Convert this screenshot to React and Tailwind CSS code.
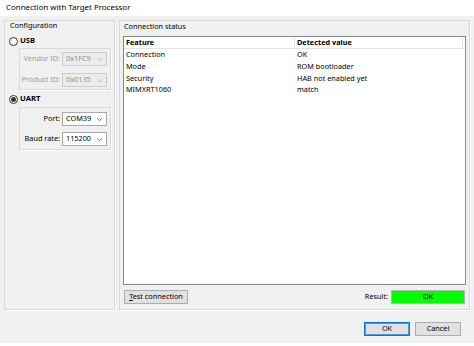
import React from "react";

function Chevron({ color = "#555" }) {
  return (
    <svg width="7" height="5" viewBox="0 0 7 5">
      <path d="M1 1.2 L3.5 3.6 L6 1.2" fill="none" stroke={color} strokeWidth="0.8" />
    </svg>
  );
}

function Combo({ value, disabled }) {
  return (
    <div
      className={
        "w-[45px] h-[14px] flex items-center justify-between pl-[3px] pr-[3px] border " +
        (disabled
          ? "border-[#cccccc] bg-[#ececec] text-[#8d8d8d]"
          : "border-[#a9a9a9] bg-white text-black")
      }
    >
      <span>{value}</span>
      <Chevron color={disabled ? "#b0b0b0" : "#555"} />
    </div>
  );
}

function Radio({ checked }) {
  return (
    <div className="w-[9px] h-[9px] rounded-full border border-[#333333] bg-white flex items-center justify-center shrink-0">
      {checked && <div className="w-[5px] h-[5px] rounded-full bg-[#333333]" />}
    </div>
  );
}

const rows = [
  ["Connection", "OK"],
  ["Mode", "ROM bootloader"],
  ["Security", "HAB not enabled yet"],
  ["MIMXRT1060", "match"],
];

export default function App() {
  return (
    <div className="relative w-[474px] h-[346px] bg-[#f0f0f0] flex flex-col text-[7.3px] leading-none text-black font-['Noto_Sans',sans-serif] overflow-hidden whitespace-nowrap">
      <div className="h-[16px] bg-white flex items-center pl-[6px] shrink-0 text-[7.9px]">
        Connection with Target Processor
      </div>
      <div className="flex gap-[4px] pl-[4px] pr-[4px] pt-[4px] shrink-0">
        <div className="w-[111px] h-[290px] border border-[#d9d9d9] shadow-[1px_1px_0_#ffffff] flex flex-col">
          <div className="h-[10px] flex items-center pl-[5px]">Configuration</div>
          <div className="h-[10px] mt-[5px] flex items-center gap-[2px] pl-[4px] font-bold text-[7.6px]">
            <Radio />
            <span>USB</span>
          </div>
          <div className="ml-[14px] w-[92px] mt-[2px] border border-[#d9d9d9] shadow-[1px_1px_0_#ffffff] pt-[3px] pb-[2px] pr-[3px] flex flex-col gap-[7px] text-[#9a9a9a]">
            <div className="flex items-center justify-end gap-[2px]">
              <span>Vendor ID:</span>
              <Combo value="0x1FC9" disabled />
            </div>
            <div className="flex items-center justify-end gap-[2px]">
              <span>Product ID:</span>
              <Combo value="0x0135" disabled />
            </div>
          </div>
          <div className="h-[10px] mt-[4px] flex items-center gap-[2px] pl-[4px] font-bold text-[7.6px]">
            <Radio checked />
            <span>UART</span>
          </div>
          <div className="ml-[14px] w-[92px] mt-[3px] border border-[#d9d9d9] shadow-[1px_1px_0_#ffffff] pt-[4px] pb-[3px] pr-[3px] flex flex-col gap-[6px]">
            <div className="flex items-center justify-end gap-[2px]">
              <span>Port:</span>
              <Combo value="COM39" />
            </div>
            <div className="flex items-center justify-end gap-[2px]">
              <span>Baud rate:</span>
              <Combo value="115200" />
            </div>
          </div>
        </div>
        <div className="w-[351px] h-[290px] border border-[#d9d9d9] shadow-[1px_1px_0_#ffffff] flex flex-col pb-[5px]">
          <div className="h-[10px] mt-[1px] flex items-center pl-[4px]">Connection status</div>
          <div className="flex-1 bg-white border border-[#828790] mt-[4px] ml-[3px] mr-[3px] flex flex-col">
            <div className="flex h-[12px] font-bold shrink-0">
              <div className="w-[171px] border-r border-b border-[#e3e3e3] pl-[2px] flex items-center">Feature</div>
              <div className="w-[168px] pl-[2px] flex items-center border-r border-b border-[#e3e3e3]">Detected value</div>
            </div>
            {rows.map(([a, b]) => (
              <div key={a} className="flex h-[11.75px]">
                <div className="w-[171px] pl-[2px] flex items-center">{a}</div>
                <div className="flex-1 pl-[2px] flex items-center">{b}</div>
              </div>
            ))}
          </div>
          <div className="flex items-center justify-between mt-[5px] h-[14px] shrink-0 pl-[4px] pr-[4px]">
            <div className="h-[14px] w-[64px] border border-[#adadad] bg-[#e1e1e1] flex items-center justify-center">
              <span><span className="underline">T</span>est connection</span>
            </div>
            <div className="flex items-center gap-[3px]">
              <span>Result:</span>
              <div className="w-[74px] h-[14px] bg-[#00ff00] border border-[#b4b4b4] flex items-center justify-center">OK</div>
            </div>
          </div>
        </div>
      </div>
      <div className="flex-1 flex justify-end gap-[5px] pr-[13px] pt-[12px]">
        <div className="w-[46px] h-[14px] bg-[#e1e1e1] border border-[#0078d7] shadow-[inset_0_0_0_1px_#4c9be0] flex items-center justify-center">OK</div>
        <div className="w-[46px] h-[14px] bg-[#e1e1e1] border border-[#adadad] flex items-center justify-center">Cancel</div>
      </div>
      <div className="h-[3px] bg-white shrink-0" />
    </div>
  );
}
